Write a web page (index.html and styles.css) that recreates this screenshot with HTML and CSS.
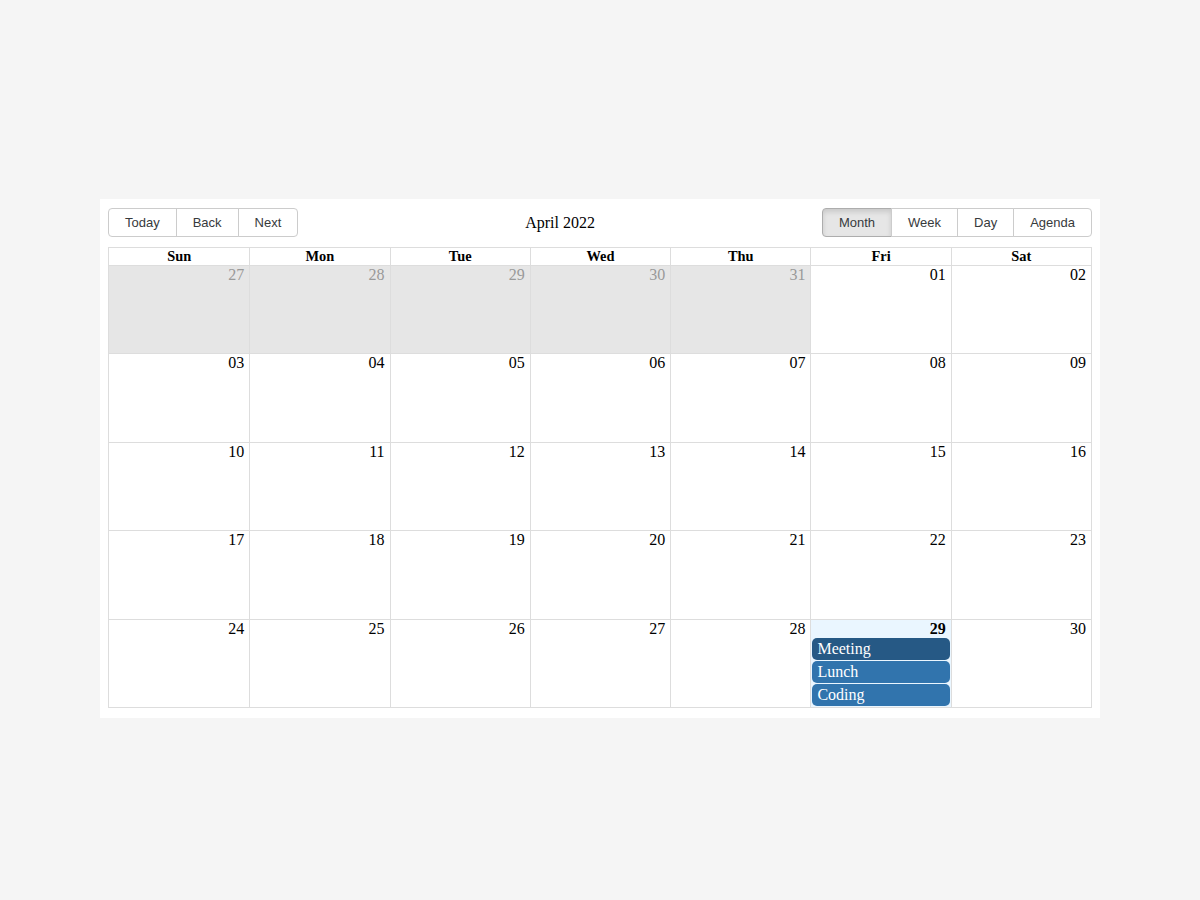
FILE: index.html
```html
<!DOCTYPE html>
<html lang="en">
<head>
  <meta charset="UTF-8"/>
  <meta name="viewport" content="width=device-width, initial-scale=1"/>
  <title>Calendar - April 2022</title>
  <link rel="stylesheet" href="styles.css">
</head>
<body>

  <div class="page">
    <div class="calendar">

      <div class="toolbar">
        <span class="btn-group">
          <button type="button">Today</button>
          <button type="button">Back</button>
          <button type="button">Next</button>
        </span>
        <span class="toolbar-label">April 2022</span>
        <span class="btn-group">
          <button type="button" class="active">Month</button>
          <button type="button">Week</button>
          <button type="button">Day</button>
          <button type="button">Agenda</button>
        </span>
      </div>

      <div class="month">
        <div class="month-header">
          <div class="header-cell">Sun</div>
          <div class="header-cell">Mon</div>
          <div class="header-cell">Tue</div>
          <div class="header-cell">Wed</div>
          <div class="header-cell">Thu</div>
          <div class="header-cell">Fri</div>
          <div class="header-cell">Sat</div>
        </div>

        <div class="month-row">
          <div class="day off-range"><span class="date">27</span></div>
          <div class="day off-range"><span class="date">28</span></div>
          <div class="day off-range"><span class="date">29</span></div>
          <div class="day off-range"><span class="date">30</span></div>
          <div class="day off-range"><span class="date">31</span></div>
          <div class="day"><span class="date">01</span></div>
          <div class="day"><span class="date">02</span></div>
        </div>

        <div class="month-row">
          <div class="day"><span class="date">03</span></div>
          <div class="day"><span class="date">04</span></div>
          <div class="day"><span class="date">05</span></div>
          <div class="day"><span class="date">06</span></div>
          <div class="day"><span class="date">07</span></div>
          <div class="day"><span class="date">08</span></div>
          <div class="day"><span class="date">09</span></div>
        </div>

        <div class="month-row">
          <div class="day"><span class="date">10</span></div>
          <div class="day"><span class="date">11</span></div>
          <div class="day"><span class="date">12</span></div>
          <div class="day"><span class="date">13</span></div>
          <div class="day"><span class="date">14</span></div>
          <div class="day"><span class="date">15</span></div>
          <div class="day"><span class="date">16</span></div>
        </div>

        <div class="month-row">
          <div class="day"><span class="date">17</span></div>
          <div class="day"><span class="date">18</span></div>
          <div class="day"><span class="date">19</span></div>
          <div class="day"><span class="date">20</span></div>
          <div class="day"><span class="date">21</span></div>
          <div class="day"><span class="date">22</span></div>
          <div class="day"><span class="date">23</span></div>
        </div>

        <div class="month-row">
          <div class="day"><span class="date">24</span></div>
          <div class="day"><span class="date">25</span></div>
          <div class="day"><span class="date">26</span></div>
          <div class="day"><span class="date">27</span></div>
          <div class="day"><span class="date">28</span></div>
          <div class="day today">
            <span class="date">29</span>
            <div class="event selected">Meeting</div>
            <div class="event">Lunch</div>
            <div class="event">Coding</div>
          </div>
          <div class="day"><span class="date">30</span></div>
        </div>
      </div>

    </div>
  </div>

</body>
</html>
```

FILE: styles.css
```css
/* --- Reset & Body --- */
* { box-sizing: border-box; }
html, body { margin: 0; padding: 0; }
body {
  background: #f5f5f5;
  font-family: "Liberation Serif", "Times New Roman", serif;
  font-size: 16px;
  color: #000;
}

.page { padding: 199px 100px 0; }

/* --- Calendar card --- */
.calendar {
  background: #fff;
  padding: 8px 8px 10px;
}

/* --- Toolbar --- */
.toolbar {
  display: flex;
  align-items: center;
  margin: 1px 0 10px;
}
.toolbar-label {
  flex: 1;
  text-align: center;
  padding: 0 10px;
}
.btn-group { display: inline-flex; white-space: nowrap; }
.btn-group button {
  font-family: "Liberation Sans", Arial, sans-serif;
  font-size: 13px;
  line-height: normal;
  color: #373a3c;
  background: #fff;
  border: 1px solid #ccc;
  border-radius: 0;
  padding: 6px 16px;
  margin: 0;
}
.btn-group button + button { margin-left: -1px; }
.btn-group button:first-child { border-radius: 4px 0 0 4px; }
.btn-group button:last-child { border-radius: 0 4px 4px 0; }
.btn-group button.active {
  background: #e6e6e6;
  border-color: #adadad;
  box-shadow: inset 0 3px 5px rgba(0,0,0,0.125);
}

/* --- Month grid --- */
.month {
  display: flex;
  flex-direction: column;
  height: 461px;
  border: 1px solid #ddd;
}
.month-header {
  display: grid;
  grid-template-columns: repeat(7, 1fr);
  border-bottom: 1px solid #ddd;
}
.header-cell {
  text-align: center;
  font-weight: bold;
  font-size: 14.4px;
  padding: 0 3px;
}
.header-cell + .header-cell { border-left: 1px solid #ddd; }

.month-row {
  flex: 1 1 0;
  display: grid;
  grid-template-columns: repeat(7, 1fr);
  min-height: 0;
}
.month-row + .month-row { border-top: 1px solid #ddd; }

.day {
  display: flex;
  flex-direction: column;
  min-width: 0;
  padding: 0 1px;
}
.day + .day { border-left: 1px solid #ddd; }
.day .date {
  text-align: right;
  padding-right: 4px;
}
.day.off-range { background: #e6e6e6; color: #999; }
.day.today { background: #eaf6ff; }
.day.today .date { font-weight: bold; }

/* --- Events --- */
.event {
  background: #3174ad;
  color: #fff;
  border-radius: 5px;
  padding: 2px 5px;
  margin-bottom: 1px;
  white-space: nowrap;
  overflow: hidden;
}
.event.selected { background: #265985; }
```
